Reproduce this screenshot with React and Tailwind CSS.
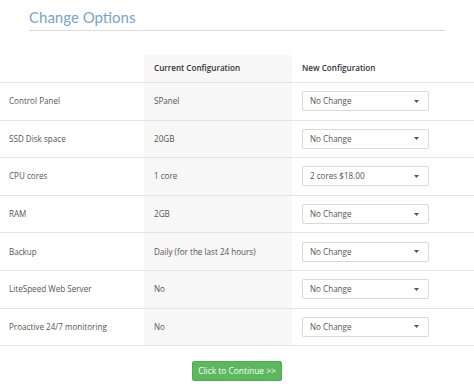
import React from "react";

const rows = [
  ["Control Panel", "SPanel", "No Change"],
  ["SSD Disk space", "20GB", "No Change"],
  ["CPU cores", "1 core", "2 cores $18.00"],
  ["RAM", "2GB", "No Change"],
  ["Backup", "Daily (for the last 24 hours)", "No Change"],
  ["LiteSpeed Web Server", "No", "No Change"],
  ["Proactive 24/7 monitoring", "No", "No Change"],
];

function Select({ value }) {
  return (
    <div className="w-[127px] h-[20px] border border-[#d9d9d9] rounded-[2px] bg-white flex items-center justify-between pl-[7px] pr-[9px] text-[#555]">
      <span>{value}</span>
      <svg width="5" height="3" viewBox="0 0 5 3"><path d="M0 0H5L2.5 3Z" fill="#555" /></svg>
    </div>
  );
}

export default function App() {
  return (
    <div className="w-[474px] h-[392px] bg-white text-[8.1px]" style={{ fontFamily: '"Open Sans", sans-serif' }}>
      <div className="px-[29px] pt-[6px]">
        <h1 className="text-[15px] leading-[22px] text-[#77a5cc] pb-[2px] border-b border-[#dcdcdc]" style={{ fontFamily: '"Lato", "Open Sans", sans-serif' }}>
          Change Options
        </h1>
      </div>
      <div className="mt-[24px] grid grid-cols-[144px_148px_1fr]">
        <div className="h-[28px] border-b border-[#e3e3e3]"></div>
        <div className="h-[28px] border-b border-[#e3e3e3] bg-[#f7f7f7] pl-[10px] flex items-center font-semibold text-[#333]">Current Configuration</div>
        <div className="h-[28px] border-b border-[#e3e3e3] pl-[10px] flex items-center font-semibold text-[#333]">New Configuration</div>
        {rows.map(([a, b, c]) => (
          <React.Fragment key={a}>
            <div className="h-[37.6px] border-b border-[#e3e3e3] pl-[9px] flex items-center text-[#555]">{a}</div>
            <div className="h-[37.6px] border-b border-[#e3e3e3] bg-[#f7f7f7] pl-[10px] flex items-center text-[#555]">{b}</div>
            <div className="h-[37.6px] border-b border-[#e3e3e3] pl-[10px] flex items-center">
              <Select value={c} />
            </div>
          </React.Fragment>
        ))}
      </div>
      <div className="flex justify-center mt-[15px]">
        <button className="w-[90px] h-[20px] rounded-[2px] bg-[#5cb85c] border border-[#4cae4c] text-white text-[8.4px] flex items-center justify-center">
          Click to Continue &gt;&gt;
        </button>
      </div>
    </div>
  );
}
